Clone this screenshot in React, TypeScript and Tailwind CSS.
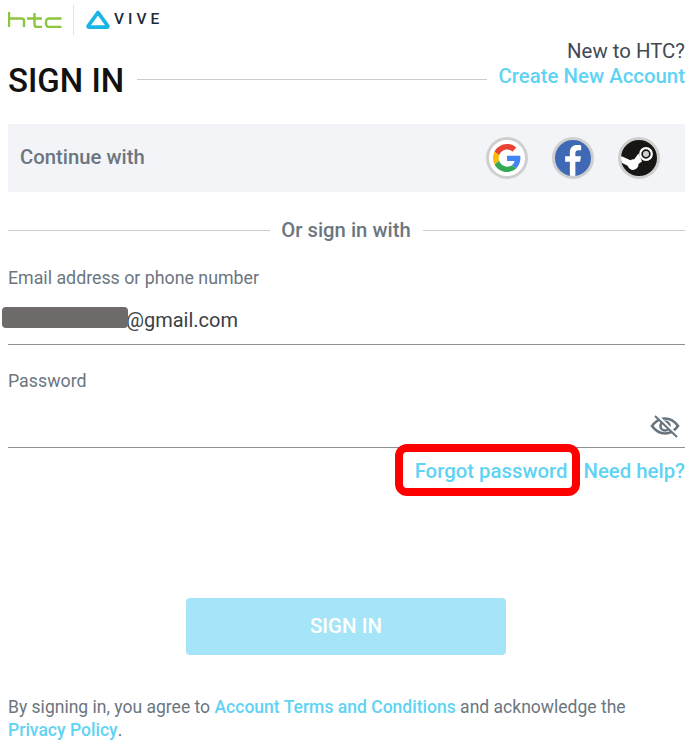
import React from "react";

function HtcVive() {
  return (
    <div className="flex items-center h-[30px]">
      <svg width="54" height="16" viewBox="0 0 54 16" fill="none" stroke="#8cc63f" strokeWidth="2.400">
        <path d="M1 0V15M1 6.500H13.500a2.500 2.500 0 0 1 2.500 2.500V15" />
        <path d="M19 6.500H34M26.500 1V12.500a2.500 2.500 0 0 0 2.500 2.500H34" />
        <path d="M53.500 6.500H41a3 3 0 0 0-3 3V12a3 3 0 0 0 3 3H53.500" />
      </svg>
      <div className="w-px h-[30px] bg-[#e3e5e8] ml-[11px] mr-[12px]" />
      <svg width="24" height="20" viewBox="0 0 24 20" fill="none" stroke="#19b5e5" strokeWidth="3.800" strokeLinejoin="round">
        <path d="M12 2.500L21.500 15.500a1 1 0 0 1-.8 1.700H3.300a1 1 0 0 1-.8-1.700Z" />
      </svg>
      <span className="ml-[4px] text-[15.500px] font-medium tracking-[4px] text-[#1d2b3a] leading-none">VIVE</span>
    </div>
  );
}

function GoogleIcon() {
  return (
    <svg width="28" height="28" viewBox="0 0 48 48">
      <path fill="#EA4335" d="M24 9.500c3.500 0 6.700 1.200 9.200 3.600l6.900-6.900C35.900 2.400 30.500 0 24 0 14.600 0 6.500 5.400 2.600 13.200l8 6.200C12.500 13.700 17.800 9.500 24 9.500z" />
      <path fill="#4285F4" d="M47 24.500c0-1.600-.1-3.100-.4-4.500H24v9h13c-.6 3-2.200 5.500-4.700 7.200l7.300 5.700C43.900 37.900 47 31.800 47 24.500z" />
      <path fill="#FBBC05" d="M10.500 28.600c-.5-1.400-.8-3-.8-4.600s.3-3.200.8-4.600l-8-6.200C.9 16.500 0 20.100 0 24s.9 7.500 2.600 10.800l7.900-6.200z" />
      <path fill="#34A853" d="M24 48c6.500 0 11.900-2.100 15.900-5.800l-7.300-5.700c-2.200 1.500-5 2.300-8.600 2.300-6.200 0-11.500-4.200-13.400-9.900l-8 6.200C6.500 42.600 14.600 48 24 48z" />
    </svg>
  );
}

function Social({ children, bg }: { children: React.ReactNode; bg: string }) {
  return (
    <div className={`w-[42px] h-[42px] rounded-full border-[3px] border-[#cfcfcf] flex items-center justify-center overflow-hidden ${bg}`}>
      {children}
    </div>
  );
}

export default function App() {
  return (
    <div className="relative w-[696px] h-[745px] bg-white overflow-hidden pl-2 pr-[11px] font-['Roboto',sans-serif]">
      <div className="pt-[5px]">
        <HtcVive />
      </div>

      <div className="flex items-center mt-[1px] h-[60px]">
        <h1 className="text-[33px] leading-none text-[#111] font-medium mt-[28px]">SIGN IN</h1>
        <div className="flex-1 h-px bg-[#c9ccd1] ml-[13px] mr-[12px] mt-[26px]" />
        <div className="text-right text-[20.400px] leading-[25px] self-start mt-[3px]">
          <div className="text-[#3f4a54]">New to HTC?</div>
          <div className="text-[#5fd3f3] font-medium">Create New Account</div>
        </div>
      </div>

      <div className="mt-[28px] h-[68px] bg-[#f2f4f8] flex items-center pl-[12px] pr-[25px]">
        <span className="text-[20.300px] font-medium text-[#6b7680] flex-1 mt-[-2px]">Continue with</span>
        <div className="flex gap-[24px]">
          <Social bg="bg-white"><GoogleIcon /></Social>
          <Social bg="bg-[#3f68b5]">
            <svg width="36" height="36" viewBox="0 0 38 38"><path fill="#fff" d="M21.500 38V23h5l.9-5.800h-5.900v-3.400c0-1.800.9-3.100 3.200-3.100h2.900V5.800c-1-.2-2.600-.4-4.200-.4-4.600 0-7.700 2.800-7.700 7.800v4h-5V23h5v15z" /></svg>
          </Social>
          <Social bg="bg-[#171614]">
            <svg width="36" height="36" viewBox="0 0 36 36" fill="none">
              <circle cx="25" cy="14" r="5.800" stroke="#fff" strokeWidth="2.200" />
              <circle cx="25" cy="14" r="3" fill="#cfcfcf" />
              <path fill="#fff" d="M0 16l9.500 4.200a5.500 5.500 0 0 1 3.500-.8l4.500-6 3.500 8-3.500 2.600a5.500 5.500 0 0 1-10.800 1.800L0 22.500z" />
            </svg>
          </Social>
        </div>
      </div>

      <div className="flex items-center mt-[26px] h-[24px]">
        <div className="flex-1 h-px bg-[#c9ccd1] mr-[-1px]" />
        <span className="px-3 text-[20.300px] font-medium text-[#6b7680]">Or sign in with</span>
        <div className="flex-1 h-px bg-[#c9ccd1]" />
      </div>

      <div className="mt-[24px] text-[17.800px] leading-[24px] text-[#6b7680]">Email address or phone number</div>
      <div className="relative mt-[9px] h-[46px] border-b border-[#8e9194] flex items-center">
        <span className="ml-[118px] text-[20px] text-[#3b3f45] mt-[-3px]">@gmail.com</span>
        <div className="absolute left-[-6px] top-[8px] w-[126px] h-[21px] rounded-[4px] bg-[#6f6b6a]" />
      </div>

      <div className="mt-[24px] text-[17.800px] leading-[24px] text-[#6b7680]">Password</div>
      <div className="relative mt-[10px] h-[45px] border-b border-[#8e9194] flex items-center justify-end pr-[5px]">
        <svg className="mt-[1px]" width="30" height="24" viewBox="0 0 30 24" fill="none" stroke="#66727c" strokeWidth="2.600">
          <path d="M2 12C6 6.500 10 4.500 15 4.500S24 6.500 28 12c-4 5.500-8 7.500-13 7.500S6 17.500 2 12Z" />
          <circle cx="15" cy="12" r="4.500" />
          <path d="M6 0.500l21 21" stroke="#ffffff" strokeWidth="3" />
          <path d="M5 2l22 21" strokeWidth="2" />
        </svg>
      </div>

      <div className="relative flex justify-end gap-[16px] mt-[9px] text-[20.350px] leading-[28px] font-medium text-[#5fd3f3]">
        <span>Forgot password</span>
        <span>Need help?</span>
        <div className="absolute left-[387px] top-[-13px] w-[185px] h-[52px] border-[8px] border-[#ff0000] rounded-[12px]" />
      </div>

      <div className="flex justify-center mt-[113px]">
        <button className="ml-[-1px] w-[320px] h-[57px] rounded-[4px] bg-[#a5e5f7] text-white text-[20.500px] font-medium">SIGN IN</button>
      </div>

      <p className="mt-[41px] text-[17.550px] leading-[23px] text-[#6b7680]">
        By signing in, you agree to <span className="font-medium text-[#5fd3f3]">Account Terms and Conditions</span> and acknowledge the <span className="font-medium text-[#5fd3f3]">Privacy Policy</span>.
      </p>
    </div>
  );
}
